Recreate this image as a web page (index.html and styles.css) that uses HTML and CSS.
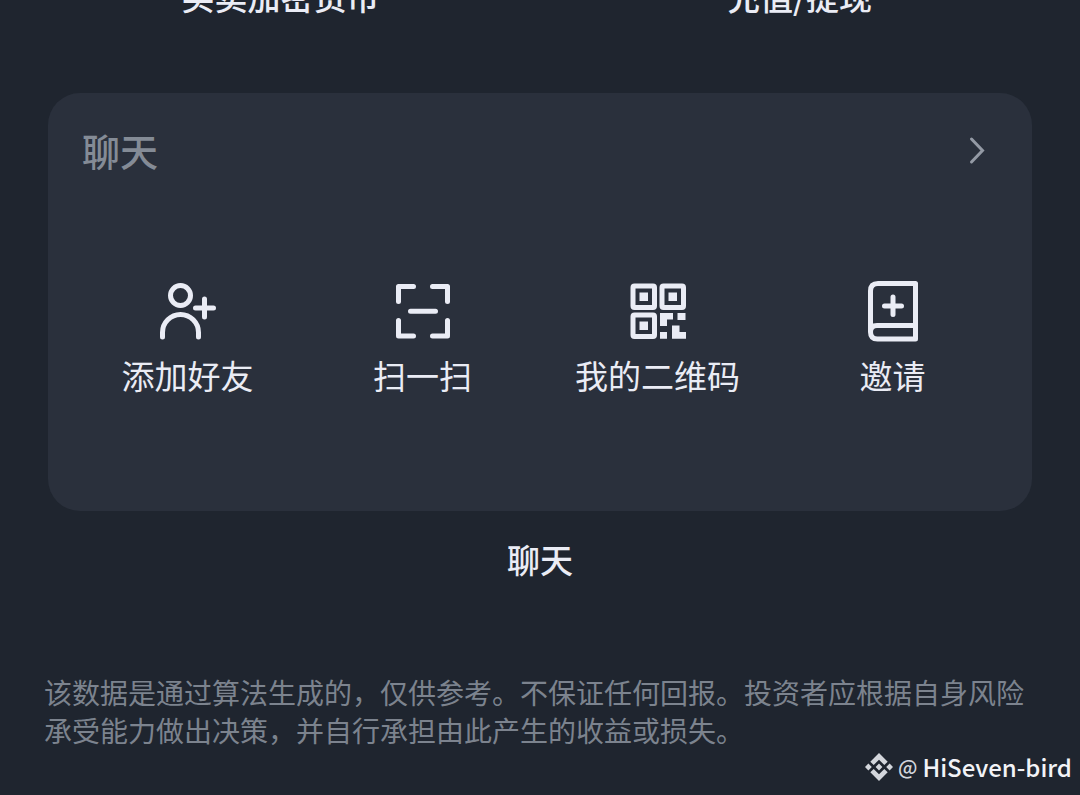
FILE: index.html
```html
<!DOCTYPE html>
<html lang="zh-CN">
<head>
<meta charset="utf-8">
<meta name="viewport" content="width=device-width, initial-scale=1">
<title>聊天</title>
<link rel="stylesheet" href="styles.css">
</head>
<body>
<main class="page">
  <div class="shortcuts">
    <p class="caption">买卖加密货币</p>
    <p class="caption">充值/提现</p>
  </div>

  <section class="card">
    <a class="card-head" href="#chat">
      <span>聊天</span>
      <svg class="chevron" viewBox="0 0 32 32" aria-hidden="true"><path d="M11.500 5L22.500 16.500L11.500 28"/></svg>
    </a>
    <div class="actions">
      <button class="action" type="button">
        <svg class="icon" viewBox="0 0 64 64" aria-hidden="true">
          <circle cx="24.500" cy="16.500" r="10"/>
          <path d="M6.500 58V53.500A18 18 0 0 1 42.500 53.500V58M39.500 29H57.500M48.500 20V38"/>
        </svg>
        <span>添加好友</span>
      </button>
      <button class="action" type="button">
        <svg class="icon" viewBox="0 0 64 64" aria-hidden="true">
          <path d="M7.500 22.500V7.500H22.500M41.500 7.500H56.500V22.500M56.500 41.500V57H41.500M22.500 57H7.500V41.500M19.500 32.300H44.500"/>
        </svg>
        <span>扫一扫</span>
      </button>
      <button class="action" type="button">
        <svg class="icon" viewBox="0 0 64 64" aria-hidden="true">
          <rect x="7" y="7" width="21.500" height="21.500" rx="1.500"/>
          <rect x="36" y="7" width="21.500" height="21.500" rx="1.500"/>
          <rect x="7" y="36" width="21.500" height="21.500" rx="1.500"/>
          <path class="solid" d="M13.500 13.500h8.500v8.500h-8.500zM42.500 13.500h8.500v8.500h-8.500zM13.500 42.500h8.500v8.500h-8.500zM34 34h13v6.500h-6v6.500h-7zM51.500 34h8v7h-8zM46 46.500h7.500v6.500h6.500v6.700h-14zM34 53h7v6.700h-7z"/>
        </svg>
        <span>我的二维码</span>
      </button>
      <button class="action" type="button">
        <svg class="icon" viewBox="0 0 64 64" aria-hidden="true">
          <path d="M54.500 4.500H17Q9.500 4.500 9.500 12V53Q9.500 60 16.500 60H54.500ZM54.500 46.500H16Q9.500 46.500 9.500 53M32 18V35.500M23.500 27H40.500"/>
        </svg>
        <span>邀请</span>
      </button>
    </div>
  </section>

  <p class="caption section-caption">聊天</p>

  <p class="disclaimer">该数据是通过算法生成的，仅供参考。不保证任何回报。投资者应根据自身风险承受能力做出决策，并自行承担由此产生的收益或损失。</p>

  <footer class="author">
    <svg class="logo" viewBox="0 0 28 28" aria-hidden="true"><path d="M14 0L22.700 8.700L19.300 12L14 6.700L8.700 12L5.300 8.700ZM14 28L22.700 19.300L19.300 16L14 21.300L8.700 16L5.300 19.300ZM14 10.600L17.400 14L14 17.400L10.600 14ZM3.400 10.600L6.800 14L3.400 17.400L0 14ZM24.600 10.600L28 14L24.600 17.400L21.200 14Z"/></svg>
    <span class="at">@</span>
    <span>HiSeven-bird</span>
  </footer>
</main>
</body>
</html>
```
FILE: styles.css
```css
* {
  box-sizing: border-box;
}

body {
  margin: 0;
  background: #1f252f;
  color: #eaecf5;
  font-family: "Noto Sans CJK SC", sans-serif;
  overflow-x: hidden;
}

p {
  margin: 0;
}

.page {
  display: flow-root;
}

/* The row is scrolled partly past the top edge. */
.shortcuts {
  display: grid;
  grid-template-columns: 1fr 1fr;
  gap: 54px;
  margin: -24px 48px 0;
}

.caption {
  font-size: 33px;
  line-height: 40px;
  font-weight: 500;
  text-align: center;
}

.card {
  margin: 77px 48px 0;
  padding: 33px 22px 116px;
  border-radius: 32px;
  background: #2a303c;
}

.card-head {
  display: flex;
  align-items: center;
  justify-content: space-between;
  padding: 0 18px 0 12px;
  color: #848b96;
  font-size: 38px;
  font-weight: 500;
  line-height: 48px;
  text-decoration: none;
}

.chevron {
  width: 32px;
  height: 32px;
  fill: none;
  stroke: #949aa5;
  stroke-width: 3;
  stroke-linecap: round;
}

.actions {
  display: grid;
  grid-template-columns: repeat(4, 1fr);
  margin-top: 105px;
}

.action {
  display: flex;
  flex-direction: column;
  align-items: center;
  gap: 12px;
  padding: 0;
  border: 0;
  background: none;
  color: inherit;
  font-family: inherit;
  font-size: 33px;
  line-height: 40px;
  white-space: nowrap;
}

.icon {
  width: 64px;
  height: 64px;
  fill: none;
  stroke: #eaecf5;
  stroke-width: 5;
  stroke-linecap: round;
  stroke-linejoin: round;
}

.icon .solid {
  fill: #eaecf5;
  stroke: none;
}

.section-caption {
  margin-top: 28px;
}

.disclaimer {
  margin: 94px 44px 0;
  color: #7c838e;
  font-size: 28px;
  line-height: 38px;
}

.author {
  display: flex;
  align-items: center;
  justify-content: flex-end;
  gap: 5px;
  padding: 2px 8px 0;
  color: #f2f3f7;
  font-size: 24px;
  font-weight: 500;
  line-height: 32px;
}

.logo {
  width: 28px;
  height: 28px;
  fill: #d3d6dc;
}

.at {
  color: #d3d6dc;
  font-size: 20px;
}
```
